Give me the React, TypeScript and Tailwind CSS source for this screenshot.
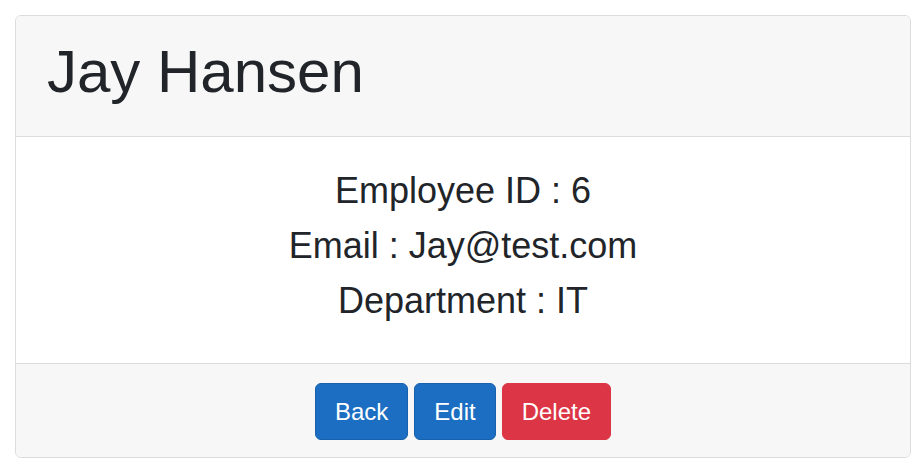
export default function App() {
  const fields = [
    { label: 'Employee ID', value: '6' },
    { label: 'Email', value: 'Jay@test.com' },
    { label: 'Department', value: 'IT' },
  ];

  return (
    <div className="min-h-screen bg-white pt-[15px] pl-[15px] font-['Liberation_Sans',Arial,sans-serif] text-[#212529]">
      <div className="w-[896px] rounded-[6px] border border-[#dcdcdc] overflow-hidden">
        {/* Header */}
        <div className="bg-[#f7f7f7] border-b border-[#dcdcdc] pl-[31px] pt-[20px] pb-[28px]">
          <h1 className="text-[60px] leading-[72px] font-normal">Jay Hansen</h1>
        </div>

        {/* Body */}
        <div className="bg-white pt-[26px] pb-[35px] text-center">
          {fields.map((f) => (
            <div key={f.label} className="text-[36px] leading-[55px]">
              {f.label} : {f.value}
            </div>
          ))}
        </div>

        {/* Footer */}
        <div className="bg-[#f7f7f7] border-t border-[#dcdcdc] pt-[19px] pb-[17px] flex justify-center gap-[6px]">
          <button className="h-[57px] px-[19px] text-[24px] text-white bg-[#1b6ec2] border border-[#1861ac] rounded-[6px]">
            Back
          </button>
          <button className="h-[57px] px-[19px] text-[24px] text-white bg-[#1b6ec2] border border-[#1861ac] rounded-[6px]">
            Edit
          </button>
          <button className="h-[57px] px-[19px] text-[24px] text-white bg-[#dc3545] border border-[#dc3545] rounded-[6px]">
            Delete
          </button>
        </div>
      </div>
    </div>
  );
}
